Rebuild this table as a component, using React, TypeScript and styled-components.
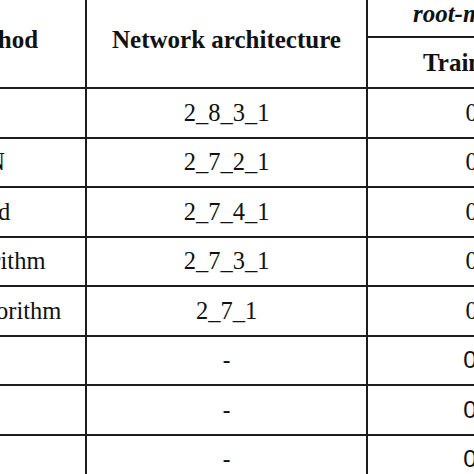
import React from 'react';
import styled, { createGlobalStyle } from 'styled-components';

const GlobalStyle = createGlobalStyle`
  html, body {
    margin: 0;
    padding: 0;
    background: #ffffff;
    overflow: hidden;
  }
  body {
    width: 474px;
    height: 474px;
  }
`;

const Page = styled.div`
  width: 474px;
  height: 474px;
  overflow: hidden;
  background: #fff;
`;

const Table = styled.table`
  border-collapse: collapse;
  table-layout: fixed;
  width: 787px;
  min-width: 787px;
  margin-left: -94px;
  margin-top: -10px;
  font-family: 'Liberation Serif', 'Times New Roman', serif;
  color: #111;
  td, th {
    border: 2px solid #1c1c1c;
    padding: 0;
  }
`;

const HeadCell = styled.th<{ $italic?: boolean; $h?: number }>`
  font-weight: bold;
  font-size: 25px;
  font-style: ${(p) => (p.$italic ? 'italic' : 'normal')};
  text-align: center;
  vertical-align: middle;
  height: ${(p) => (p.$h ? `${p.$h}px` : 'auto')};
  white-space: nowrap;
`;

const NameCell = styled.td`
  font-size: 24.5px;
  text-align: left;
  padding-left: 7px !important;
  white-space: nowrap;
  overflow: hidden;
`;

const Cell = styled.td<{ $sans?: boolean }>`
  font-size: 24.5px;
  font-family: ${(p) =>
    p.$sans
      ? "'Liberation Sans Narrow', 'Liberation Sans', Arial, sans-serif"
      : "'Liberation Serif', 'Times New Roman', serif"};
  text-align: center;
  vertical-align: middle;
  white-space: nowrap;
`;

const Row = styled.tr`
  height: 49.5px;
`;

type Item = { name: string; arch: string; train: string; test: string; sans?: boolean };

const rows: Item[] = [
  { name: 'BPNN', arch: '2_8_3_1', train: '0.05', test: '0.07' },
  { name: 'RBF-NN', arch: '2_7_2_1', train: '0.04', test: '0.06' },
  { name: 'Improved', arch: '2_7_4_1', train: '0.04', test: '0.05' },
  { name: 'BP algorithm', arch: '2_7_3_1', train: '0.03', test: '0.05' },
  { name: 'PSO algorithm', arch: '2_7_1', train: '0.02', test: '0.04' },
  { name: 'SVM', arch: '-', train: '0.06', test: '0.08', sans: true },
  { name: 'RF', arch: '-', train: '0.07', test: '0.09', sans: true },
  { name: 'MLR', arch: '-', train: '0.09', test: '0.11', sans: true },
];

export default function App() {
  return (
    <Page>
      <GlobalStyle />
      <Table>
        <colgroup>
          <col style={{ width: 179 }} />
          <col style={{ width: 281 }} />
          <col style={{ width: 240 }} />
          <col style={{ width: 188 }} />
        </colgroup>
        <thead>
          <tr>
            <HeadCell rowSpan={2}>Method</HeadCell>
            <HeadCell rowSpan={2}>Network architecture</HeadCell>
            <HeadCell colSpan={2} $italic $h={44}>
              root-mean-square error (RMSE)
            </HeadCell>
          </tr>
          <tr>
            <HeadCell $h={49}>Training set</HeadCell>
            <HeadCell $h={49}>Testing set</HeadCell>
          </tr>
        </thead>
        <tbody>
          {rows.map((r) => (
            <Row key={r.name}>
              <NameCell>{r.name}</NameCell>
              <Cell $sans={r.sans}>{r.arch}</Cell>
              <Cell $sans={r.sans}>{r.train}</Cell>
              <Cell $sans={r.sans}>{r.test}</Cell>
            </Row>
          ))}
        </tbody>
      </Table>
    </Page>
  );
}
